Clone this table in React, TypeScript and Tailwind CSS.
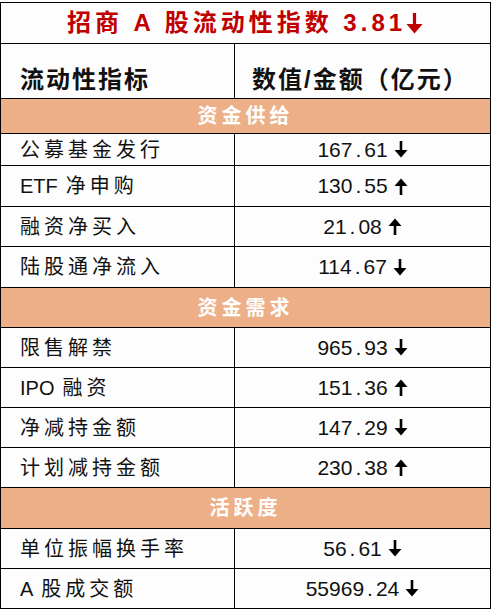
import React from "react";

type Item = { pre?: string; name: string; value: string; up: boolean; h: string };
type Section = { title: string; h: string; items: Item[] };

const sections: Section[] = [
  {
    title: "资金供给",
    h: "h-[35px]",
    items: [
      { name: "公募基金发行", value: "167.61", up: false, h: "h-[32px]" },
      { pre: "ETF", name: "净申购", value: "130.55", up: true, h: "h-[41px]" },
      { name: "融资净买入", value: "21.08", up: true, h: "h-[40px]" },
      { name: "陆股通净流入", value: "114.67", up: false, h: "h-[41px]" },
    ],
  },
  {
    title: "资金需求",
    h: "h-[40px]",
    items: [
      { name: "限售解禁", value: "965.93", up: false, h: "h-[40px]" },
      { pre: "IPO", name: "融资", value: "151.36", up: true, h: "h-[40px]" },
      { name: "净减持金额", value: "147.29", up: false, h: "h-[40px]" },
      { name: "计划减持金额", value: "230.38", up: true, h: "h-[40px]" },
    ],
  },
  {
    title: "活跃度",
    h: "h-[41px]",
    items: [
      { name: "单位振幅换手率", value: "56.61", up: false, h: "h-[40px]" },
      { pre: "A", name: "股成交额", value: "55969.24", up: false, h: "h-[40px]" },
    ],
  },
];

const Arrow = ({ up, className }: { up: boolean; className: string }) => (
  <svg viewBox="0 0 14 17" className={className} fill="currentColor">
    {up ? (
      <>
        <rect x="5.7" y="6" width="2.6" height="11" />
        <polygon points="0.5,8 13.5,8 7,0.5" />
      </>
    ) : (
      <>
        <rect x="5.7" y="0" width="2.6" height="11" />
        <polygon points="0.5,9 13.5,9 7,16.5" />
      </>
    )}
  </svg>
);

const Num = ({ v }: { v: string }) => {
  const [a, b] = v.split(".");
  return (
    <span className="flex items-baseline">
      <span>{a}</span>
      <span className="mx-[3px]">.</span>
      <span>{b}</span>
    </span>
  );
};

export default function App() {
  return (
    <div className="bg-white w-[495px] h-[611px] pt-[2px] font-['Liberation_Sans','Noto_Sans_CJK_SC',sans-serif] text-[#111]">
      <div className="w-[491px] border-t border-l border-r border-black">
        <div className="h-[41px] border-b border-black flex items-center justify-center text-[24px] font-bold tracking-[4px] text-[#c00000] bg-[#fdfdfd]">
          <span>招商 A 股流动性指数 3.81</span>
          <Arrow up={false} className="w-[19px] h-[21px] ml-[-1px] text-[#c00000]" />
        </div>
        <div className="h-[55px] border-b border-black flex text-[24px] font-semibold leading-none bg-[#fdfdfd]">
          <div className="w-[234px] border-r border-black flex items-end pl-[19px] pb-[6px] tracking-[2px]">
            流动性指标
          </div>
          <div className="flex-1 flex items-end pl-[17px] pb-[6px] tracking-[2px]">数值/金额（亿元）</div>
        </div>
        {sections.map((s) => (
          <React.Fragment key={s.title}>
            <div
              className={`${s.h} border-b border-black bg-[#edaf88] flex items-center justify-center text-white text-[20px] font-bold tracking-[4px]`}
            >
              {s.title}
            </div>
            {s.items.map((it) => (
              <div key={it.name} className={`${it.h} border-b border-black flex bg-[#fdfdfd]`}>
                <div className="w-[234px] border-r border-black flex items-center pl-[19px] text-[20px]">
                  {it.pre && <span className="mr-[8px]">{it.pre}</span>}
                  <span className="tracking-[4px]">{it.name}</span>
                </div>
                <div className="flex-1 flex items-center justify-center gap-[6px] text-[21px]">
                  <Num v={it.value} />
                  <Arrow up={it.up} className="w-[14px] h-[17px] text-black" />
                </div>
              </div>
            ))}
          </React.Fragment>
        ))}
      </div>
    </div>
  );
}
